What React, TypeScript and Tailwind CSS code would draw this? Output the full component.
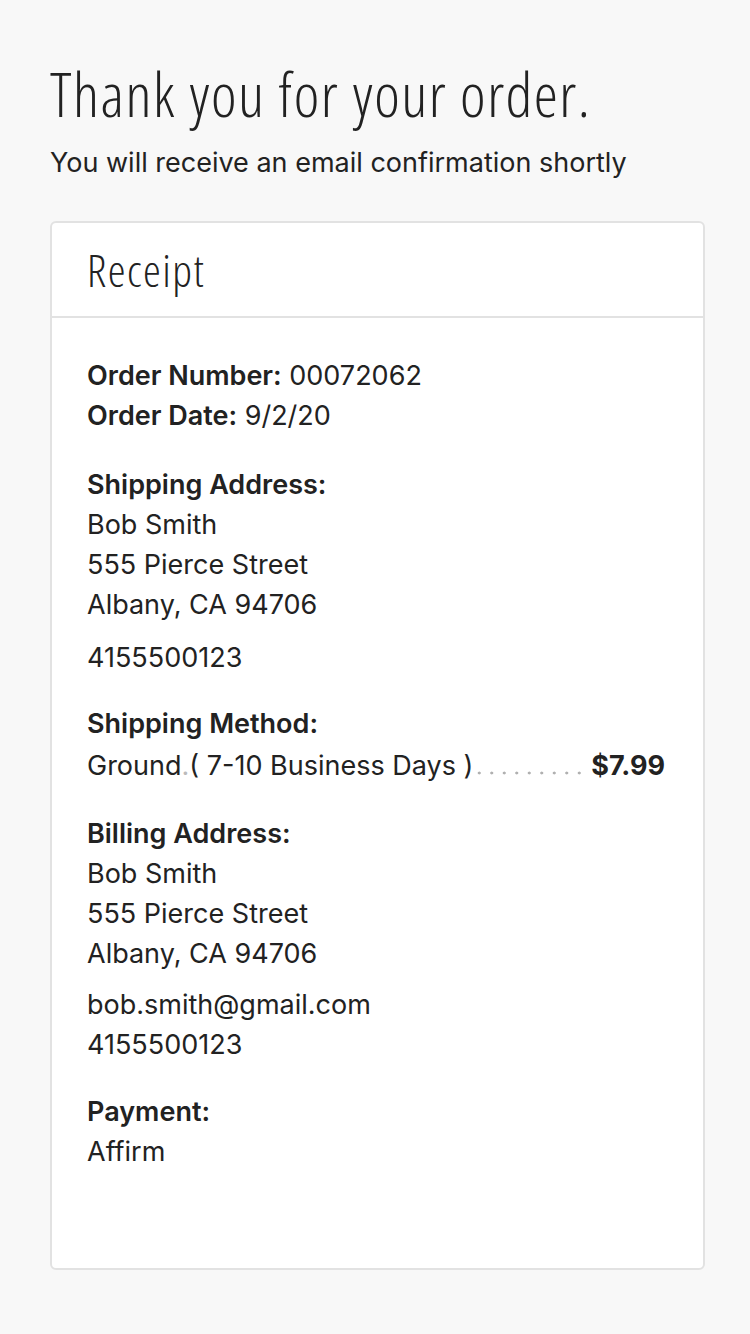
import React from "react";

const body = { fontFamily: 'Inter, "Noto Sans", sans-serif' };
const head = { fontFamily: '"Open Sans", "Noto Sans", sans-serif' };

export default function App() {
  return (
    <div className="min-h-[1334px] w-[750px] bg-[#f8f8f8] text-[#212529]" style={body}>
      <div className="pl-[50px] pr-[45px] pt-[59px]">
        <h1 className="font-stretch-semi-condensed text-[61px] leading-[70px] font-light tracking-[1.5px] text-[#222]" style={head}>
          Thank you for your order.
        </h1>
        <p className="mt-[16px] text-[27px] leading-[36px] text-[#222]">You will receive an email confirmation shortly</p>

        <div className="mt-[40px] rounded-[6px] border-2 border-[#e2e2e2] bg-white">
          <div className="flex h-[95px] items-center border-b-2 border-[#e2e2e2] px-[35px]">
            <h2 className="font-stretch-semi-condensed text-[45px] leading-none font-light tracking-[1.5px] text-[#222]" style={head}>Receipt</h2>
          </div>
          <div className="h-[950px] px-[35px] pt-[38px] text-[27px] leading-[40px] text-[#222]">
            <div>
              <div><span className="font-semibold">Order Number:</span> 00072062</div>
              <div><span className="font-semibold">Order Date:</span> 9/2/20</div>
            </div>

            <div className="mt-[29px]">
              <div className="font-semibold">Shipping Address:</div>
              <div>Bob Smith</div>
              <div>555 Pierce Street</div>
              <div>Albany, CA 94706</div>
              <div className="mt-[13px]">4155500123</div>
            </div>

            <div className="mt-[26px]">
              <div className="font-semibold">Shipping Method:</div>
              <div className="mt-[2px] flex items-baseline pr-[3px]">
                <span className="whitespace-nowrap">Ground<span className="text-[#bbb]">.</span>( 7-10 Business Days )</span>
                <div className="mr-[2px] h-[4px] min-w-0 flex-1 bg-[radial-gradient(circle,#b0b0b0_1.2px,transparent_1.8px)] bg-[length:12.5px_4px] bg-repeat-x" />
                <span className="whitespace-nowrap font-bold">$7.99</span>
              </div>
            </div>

            <div className="mt-[28px]">
              <div className="font-semibold">Billing Address:</div>
              <div>Bob Smith</div>
              <div>555 Pierce Street</div>
              <div>Albany, CA 94706</div>
              <div className="mt-[11px]">bob.smith@gmail.com</div>
              <div>4155500123</div>
            </div>

            <div className="mt-[27px]">
              <div className="font-semibold">Payment:</div>
              <div>Affirm</div>
            </div>
          </div>
        </div>
      </div>
    </div>
  );
}
